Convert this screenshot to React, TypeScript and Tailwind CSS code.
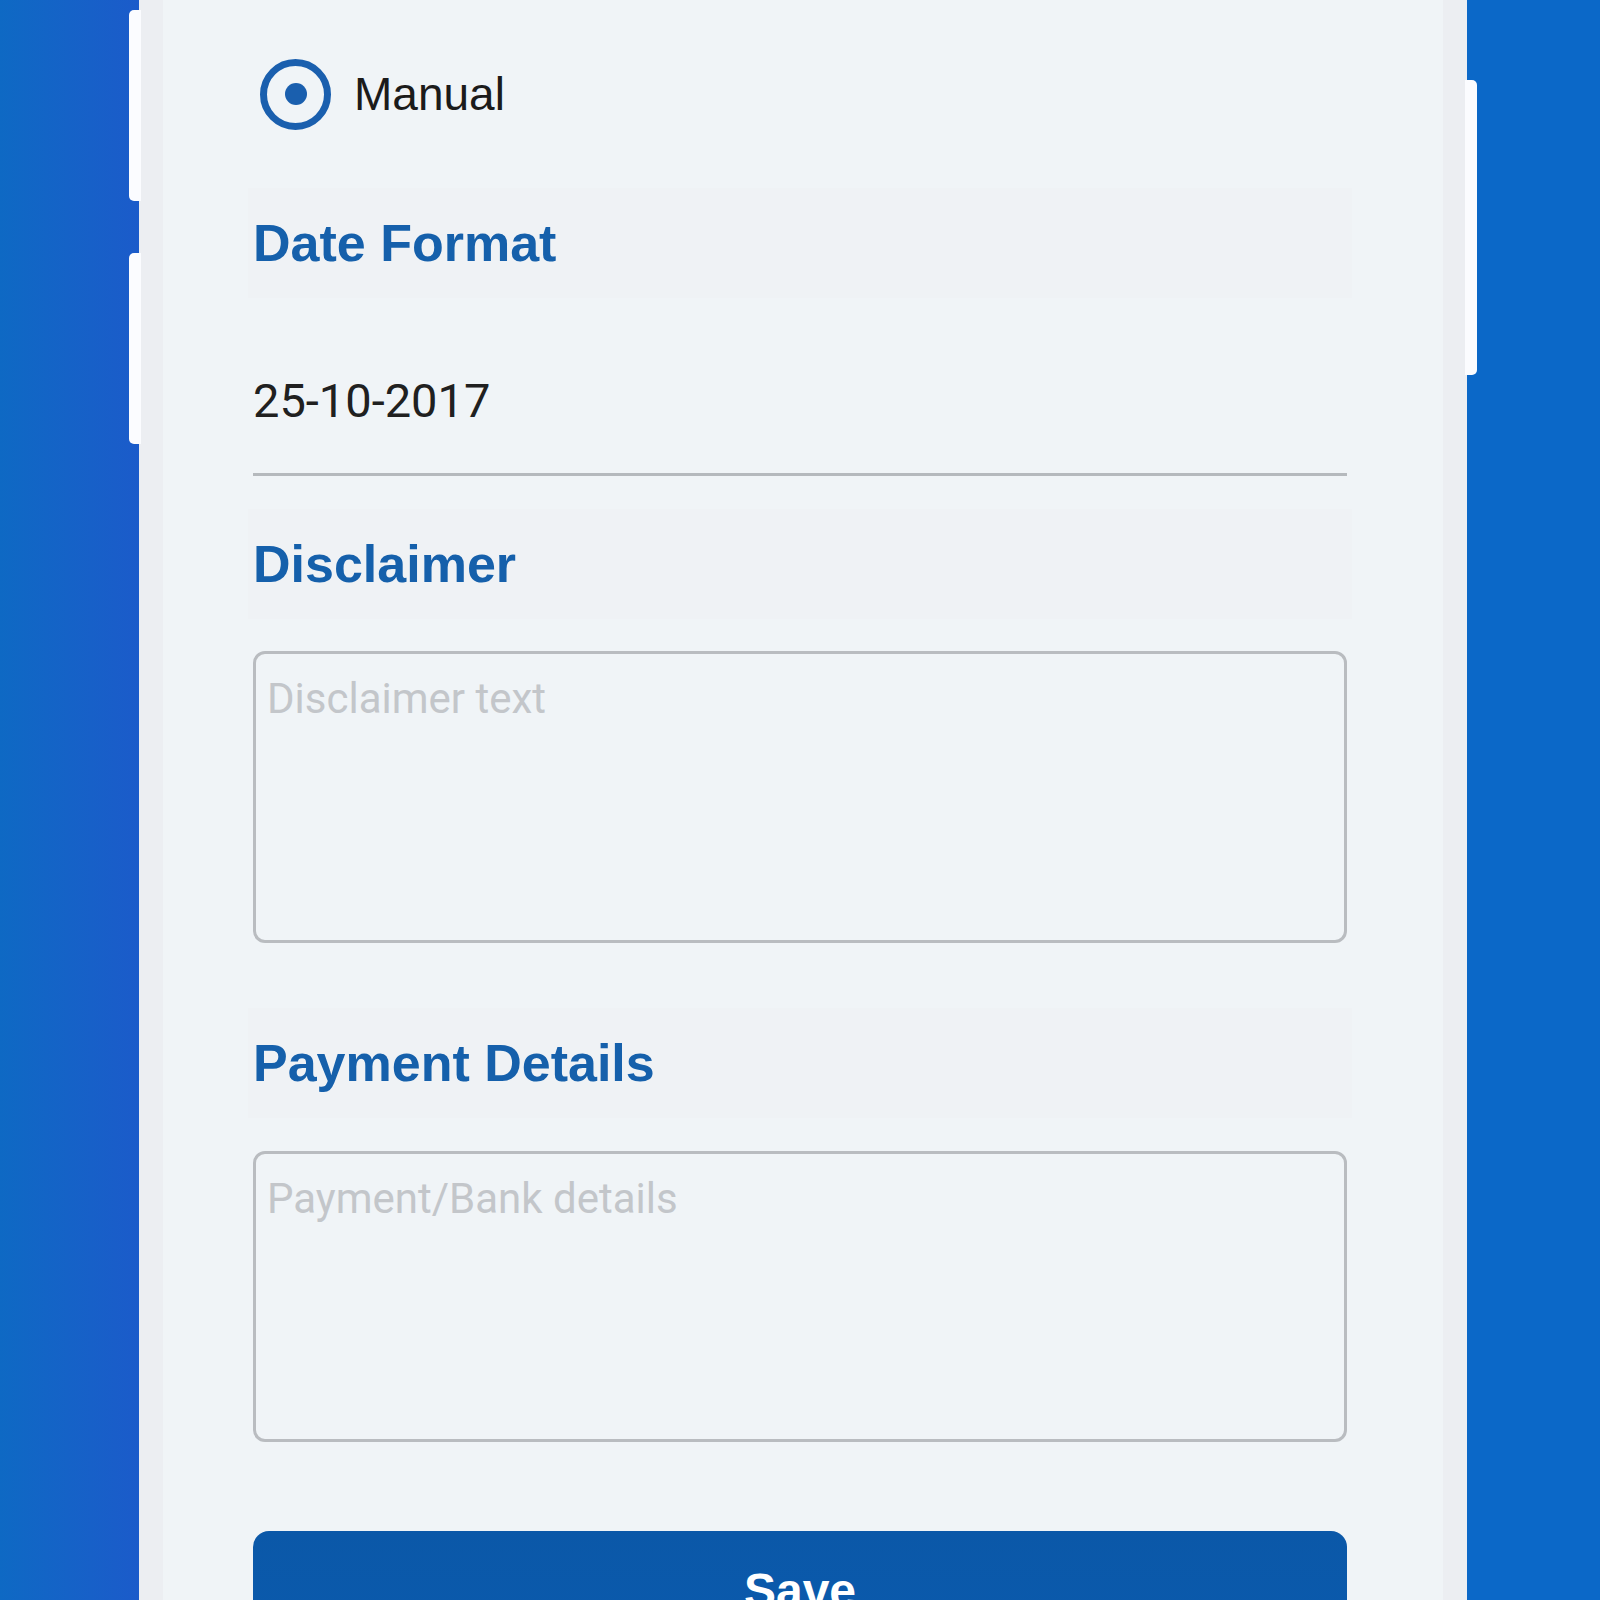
import React from "react";

function SectionTitle({ children }: { children: React.ReactNode }) {
  return (
    <div className="h-[110px] shrink-0 flex items-center bg-[#eff2f5] -mx-[5px] px-[5px]">
      <h2 className="font-['Liberation_Sans',Arial,sans-serif] font-bold text-[52px] leading-none text-[#1560ab]">
        {children}
      </h2>
    </div>
  );
}

function Field({ placeholder }: { placeholder: string }) {
  return (
    <textarea
      placeholder={placeholder}
      className="block w-full h-full resize-none bg-transparent border-[3px] border-[#b9bcc0] rounded-[12px] px-[11px] pt-[20px] font-['Roboto',sans-serif] text-[42px] leading-[50px] text-[#222] placeholder:text-[#c3c6ca] outline-none"
    />
  );
}

export default function App() {
  return (
    <div className="w-[1600px] h-[1600px] overflow-hidden flex bg-[#0b68c8]">
      <div className="w-[139px] shrink-0 bg-gradient-to-r from-[#0e69c4] to-[#1b5bca]" />

      {/* device body */}
      <div className="relative w-[1328px] shrink-0 bg-[#eceef2] pl-[24px] pr-[24px]">
        {/* side keys */}
        <div className="absolute left-[-10px] top-[10px] w-[12px] h-[191px] rounded-l-[5px] bg-[#fbfcff]" />
        <div className="absolute left-[-10px] top-[253px] w-[12px] h-[191px] rounded-l-[5px] bg-[#fbfcff]" />
        <div className="absolute right-[-10px] top-[80px] w-[12px] h-[295px] rounded-r-[5px] bg-[#fbfcff]" />

        <div className="h-full overflow-hidden bg-[#f0f4f7] pl-[90px] pr-[96px] flex flex-col">
          {/* numbering mode */}
          <label className="h-[188px] shrink-0 flex items-center pl-[7px] gap-[23px]">
            <span className="w-[71px] h-[71px] rounded-full border-[7px] border-[#1a5fae] flex items-center justify-center">
              <span className="w-[22px] h-[22px] rounded-full bg-[#1a5fae]" />
            </span>
            <span className="font-['Liberation_Sans',Arial,sans-serif] text-[46px] leading-none text-[#1b1b1b]">
              Manual
            </span>
          </label>

          <SectionTitle>Date Format</SectionTitle>
          <div className="h-[178px] shrink-0 pt-[30px] flex items-center border-b-[3px] border-[#b5b9bd]">
            <span className="font-['Roboto',sans-serif] text-[47px] leading-none text-[#202020]">
              25-10-2017
            </span>
          </div>

          <div className="mt-[33px] shrink-0">
            <SectionTitle>Disclaimer</SectionTitle>
          </div>
          <div className="mt-[32px] h-[292px] shrink-0">
            <Field placeholder="Disclaimer text" />
          </div>

          <div className="mt-[65px] shrink-0">
            <SectionTitle>Payment Details</SectionTitle>
          </div>
          <div className="mt-[33px] h-[291px] shrink-0">
            <Field placeholder="Payment/Bank details" />
          </div>

          <button className="mt-[89px] h-[120px] shrink-0 w-full rounded-[16px] bg-gradient-to-b from-[#0b58a8] to-[#0a5aad] text-white font-['Liberation_Sans',Arial,sans-serif] font-bold text-[48px] leading-none">
            Save
          </button>
        </div>
      </div>

      <div className="flex-1" />
    </div>
  );
}
